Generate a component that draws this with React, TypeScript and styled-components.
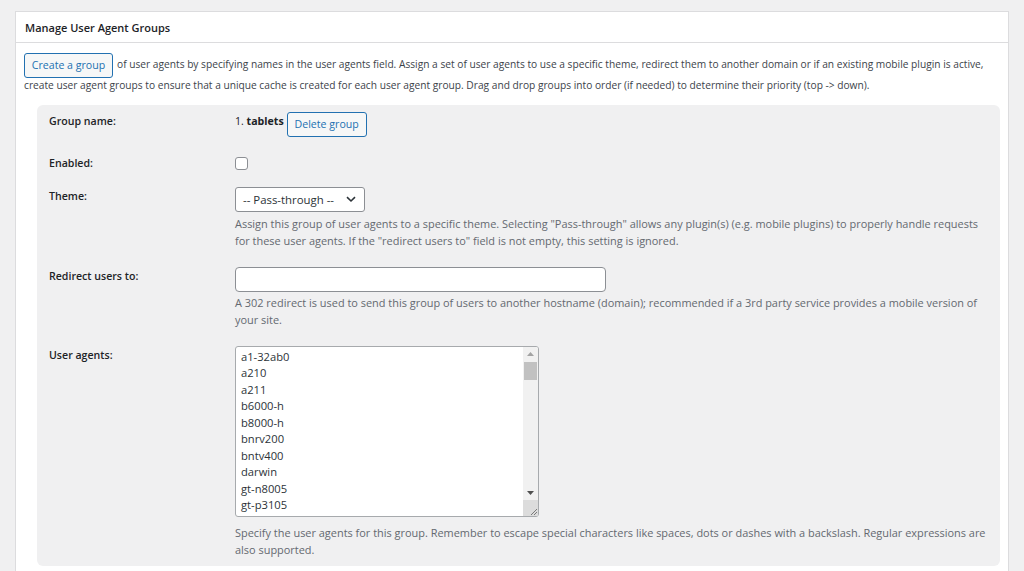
import React from "react";
import styled, { createGlobalStyle } from "styled-components";

const GlobalStyle = createGlobalStyle`
  html, body { margin: 0; padding: 0; background: #f0f0f1; }
  body { font-family: "Open Sans", "Noto Sans", Arial, sans-serif; color: #3c434a; }
  * { box-sizing: border-box; }
`;

const Page = styled.div`
  padding: 11px 15px 0 15px;
  height: 571px;
  overflow: hidden;
`;

const Panel = styled.section`
  width: 994px;
  background: #ffffff;
  border: 1px solid #dcdcde;
`;

const PanelHeader = styled.h2`
  margin: 0;
  height: 31px;
  padding: 0 9px;
  display: flex;
  align-items: center;
  border-bottom: 1px solid #dcdcde;
  font-size: 11px;
  font-weight: 600;
  color: #1d2327;
`;

const PanelBody = styled.div`
  padding: 11px 8px 20px 8px;
`;

const Intro = styled.p`
  margin: 0;
  font-size: 10.2px;
  line-height: 20px;
  color: #3c434a;
  white-space: nowrap;
`;

const Button = styled.button<{ $w: number; $inline?: boolean }>`
  display: inline-flex;
  align-items: center;
  justify-content: center;
  height: 25px;
  padding: 0;
  width: ${(p) => p.$w}px;
  margin: ${(p) => (p.$inline ? "-3px 4px -3px 0" : "0")};
  vertical-align: middle;
  border: 1px solid #2271b1;
  border-radius: 3px;
  background: #f6f7f7;
  color: #2271b1;
  font-family: inherit;
  font-size: 10.6px;
  white-space: nowrap;
  cursor: pointer;
`;

const GroupBox = styled.div`
  margin: 10px 0 0 13px;
  background: #f0f0f1;
  border-radius: 6px;
  padding: 7px 13px 7px 12px;
  display: flex;
  flex-direction: column;
`;

const Row = styled.div<{ $top: number }>`
  display: grid;
  grid-template-columns: 186px 1fr;
  margin-top: ${(p) => p.$top}px;
`;

const Label = styled.div`
  font-size: 10.6px;
  line-height: 18px;
  font-weight: 600;
  color: #1d2327;
`;

const Field = styled.div`
  display: flex;
  flex-direction: column;
  align-items: flex-start;
`;

const NameLine = styled.div`
  display: flex;
  align-items: flex-start;
  gap: 3px;
  font-size: 10.6px;
  line-height: 18px;
  color: #1d2327;
  b { font-weight: 700; }
`;

const Checkbox = styled.span`
  display: block;
  margin-top: 3px;
  width: 13px;
  height: 13px;
  border: 1px solid #8c8f94;
  border-radius: 3px;
  background: #fff;
`;

const SelectBox = styled.div`
  width: 130px;
  height: 25px;
  border: 1px solid #8c8f94;
  border-radius: 3px;
  background: #fff;
  display: flex;
  align-items: center;
  justify-content: space-between;
  padding: 0 8px 0 7px;
  font-size: 11.4px;
  color: #2c3338;
`;

const TextInput = styled.div`
  width: 371px;
  height: 25px;
  border: 1px solid #8c8f94;
  border-radius: 4px;
  background: #fff;
`;

const Desc = styled.p<{ $top: number }>`
  margin: ${(p) => p.$top}px 0 0 0;
  font-size: 10.95px;
  line-height: 17.5px;
  color: #646970;
  white-space: nowrap;
`;

const AreaWrap = styled.div`
  width: 304px;
  height: 171px;
  border: 1px solid #a7aaad;
  border-radius: 3px;
  background: #fff;
  display: flex;
  overflow: hidden;
`;

const AreaText = styled.div`
  flex: 1;
  padding: 2px 5px;
  font-size: 11.2px;
  line-height: 16.5px;
  color: #2c3338;
  overflow: hidden;
  white-space: pre;
`;

const Scrollbar = styled.div`
  width: 15px;
  display: flex;
  flex-direction: column;
  background: #f1f1f1;
`;

const ArrowBtn = styled.div`
  height: 14px;
  display: flex;
  align-items: center;
  justify-content: center;
`;

const Track = styled.div`
  flex: 1;
  padding: 1px 1px;
`;

const Thumb = styled.div`
  height: 18px;
  background: #c1c1c1;
`;

const Corner = styled.div`
  height: 16px;
  background: #dcdcdc;
  display: flex;
  align-items: flex-end;
  justify-content: flex-end;
`;

const agents = [
  "a1-32ab0",
  "a210",
  "a211",
  "b6000-h",
  "b8000-h",
  "bnrv200",
  "bntv400",
  "darwin",
  "gt-n8005",
  "gt-p3105",
];

export default function App() {
  return (
    <>
      <GlobalStyle />
      <Page>
        <Panel>
          <PanelHeader>Manage User Agent Groups</PanelHeader>
          <PanelBody>
            <Intro>
              <Button $w={89} $inline>Create a group</Button>
              of user agents by specifying names in the user agents field. Assign a set of user agents to use a specific theme, redirect them to another domain or if an existing mobile plugin is active,
              <br />
              create user agent groups to ensure that a unique cache is created for each user agent group. Drag and drop groups into order (if needed) to determine their priority (top -&gt; down).
            </Intro>
            <GroupBox>
              <Row $top={0}>
                <Label>Group name:</Label>
                <Field>
                  <NameLine>
                    <span>
                      1. <b>tablets</b>
                    </span>
                    <Button $w={80}>Delete group</Button>
                  </NameLine>
                </Field>
              </Row>
              <Row $top={17}>
                <Label>Enabled:</Label>
                <Field>
                  <Checkbox />
                </Field>
              </Row>
              <Row $top={15}>
                <Label>Theme:</Label>
                <Field>
                  <SelectBox>
                    <span>-- Pass-through --</span>
                    <svg width="10" height="7" viewBox="0 0 10 7">
                      <path d="M1 1.2 L5 5 L9 1.2" fill="none" stroke="#2c3338" strokeWidth="1.6" />
                    </svg>
                  </SelectBox>
                  <Desc $top={3}>
                    Assign this group of user agents to a specific theme. Selecting "Pass-through" allows any plugin(s) (e.g. mobile plugins) to properly handle requests
                    <br />
                    for these user agents. If the "redirect users to" field is not empty, this setting is ignored.
                  </Desc>
                </Field>
              </Row>
              <Row $top={17}>
                <Label>Redirect users to:</Label>
                <Field>
                  <TextInput />
                  <Desc $top={2}>
                    A 302 redirect is used to send this group of users to another hostname (domain); recommended if a 3rd party service provides a mobile version of
                    <br />
                    your site.
                  </Desc>
                </Field>
              </Row>
              <Row $top={17}>
                <Label>User agents:</Label>
                <Field>
                  <AreaWrap>
                    <AreaText>{agents.join("\n")}</AreaText>
                    <Scrollbar>
                      <ArrowBtn>
                        <svg width="7" height="4" viewBox="0 0 7 4">
                          <path d="M0 4 L3.5 0 L7 4 Z" fill="#a3a3a3" />
                        </svg>
                      </ArrowBtn>
                      <Track>
                        <Thumb />
                      </Track>
                      <ArrowBtn>
                        <svg width="7" height="4" viewBox="0 0 7 4">
                          <path d="M0 0 L7 0 L3.5 4 Z" fill="#505050" />
                        </svg>
                      </ArrowBtn>
                      <Corner>
                        <svg width="9" height="9" viewBox="0 0 9 9">
                          <path d="M2 8 L8 2 M5 8 L8 5" stroke="#7a7a7a" strokeWidth="1" />
                        </svg>
                      </Corner>
                    </Scrollbar>
                  </AreaWrap>
                  <Desc $top={7}>
                    Specify the user agents for this group. Remember to escape special characters like spaces, dots or dashes with a backslash. Regular expressions are
                    <br />
                    also supported.
                  </Desc>
                </Field>
              </Row>
            </GroupBox>
          </PanelBody>
        </Panel>
      </Page>
    </>
  );
}
